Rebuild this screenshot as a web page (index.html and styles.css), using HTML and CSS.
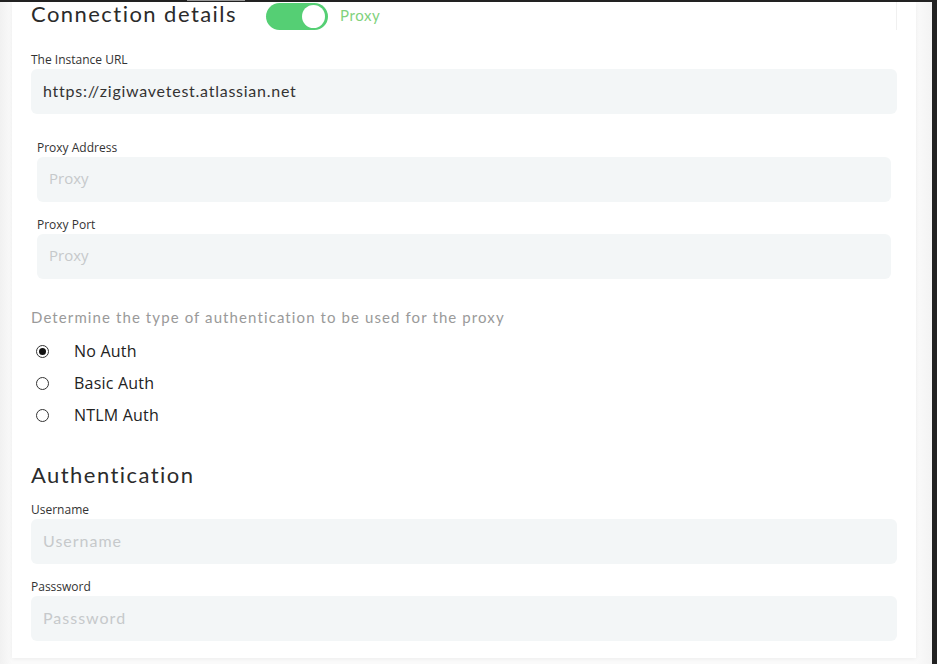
FILE: index.html
```html
<!DOCTYPE html>
<html lang="en">
<head>
    <meta charset="UTF-8">
    <meta name="viewport" content="width=device-width, initial-scale=1.0">
    <title>Connection details</title>
    <link rel="stylesheet" href="styles.css">
</head>
<body>

<div class="frame">
    <div class="topline"><span class="tab-line"></span></div>
    <div class="page">
        <div class="card">
            <div class="header">
                <h2 class="title">Connection details</h2>
                <div class="toggle on"><span class="knob"></span></div>
                <span class="toggle-label">Proxy</span>
                <div class="header-edge"></div>
            </div>

            <div class="field first">
                <label>The Instance URL</label>
                <div class="input value">https://zigiwavetest.atlassian.net</div>
            </div>

            <div class="proxy">
                <div class="field">
                    <label>Proxy Address</label>
                    <div class="input placeholder plain">Proxy</div>
                </div>
                <div class="field">
                    <label>Proxy Port</label>
                    <div class="input placeholder plain">Proxy</div>
                </div>
            </div>

            <p class="question">Determine the type of authentication to be used for the proxy</p>

            <div class="radios">
                <div class="radio checked"><span class="dot"></span>No Auth</div>
                <div class="radio"><span class="dot"></span>Basic Auth</div>
                <div class="radio"><span class="dot"></span>NTLM Auth</div>
            </div>

            <h2 class="title section">Authentication</h2>

            <div class="field tight">
                <label>Username</label>
                <div class="input placeholder">Username</div>
            </div>
            <div class="field">
                <label>Passsword</label>
                <div class="input placeholder">Passsword</div>
            </div>
        </div>
    </div>
</div>

</body>
</html>
```

FILE: styles.css
```css
html, body {
    margin: 0;
    padding: 0;
}
body {
    background-color: #ececec;
    font-family: "Open Sans", Arial, sans-serif;
    color: #333;
    overflow: hidden;
}
.frame {
    height: 664px;
    border-right: 5px solid #222;
    box-sizing: border-box;
    background: linear-gradient(to right, #f1f1f1, #fafafa 12px, #fafafa 916px, #f3f3f3);
}
.topline {
    height: 2px;
    background-color: #222;
    position: relative;
}
.tab-line {
    position: absolute;
    left: 187px;
    width: 58px;
    top: 0;
    height: 1px;
    background-color: #999;
}
.page {
    padding-left: 12px;
    width: 916px;
    box-sizing: border-box;
}
.card {
    background-color: #fff;
    padding: 0 19px 18px 19px;
    height: 656px;
    box-sizing: border-box;
    box-shadow: 0 1px 4px rgba(0, 0, 0, 0.06);
}
.header {
    display: flex;
    align-items: center;
    height: 30px;
    position: relative;
}
.header-edge {
    position: absolute;
    right: 0;
    top: 0;
    width: 1px;
    height: 28px;
    background-color: #f0f0f0;
}
.title {
    font-family: "Lato", sans-serif;
    font-weight: 400;
    font-size: 22px;
    letter-spacing: 1.45px;
    color: #2b2b2b;
    margin: 0;
    line-height: 30px;
}
.header .title {
    margin-top: -6px;
}
.toggle {
    width: 62px;
    height: 27px;
    border-radius: 14px;
    background-color: #55cf74;
    margin-left: 29px;
    position: relative;
    margin-top: -1px;
}
.knob {
    position: absolute;
    right: 3px;
    top: 2px;
    width: 23px;
    height: 23px;
    border-radius: 50%;
    background-color: #fff;
}
.toggle-label {
    font-family: "Lato", sans-serif;
    font-size: 15px;
    letter-spacing: 0.6px;
    color: #7fd27c;
    margin-left: 12px;
    margin-top: -4px;
}
.field {
    margin-top: 15px;
}
.field.first {
    margin-top: 20px;
}
.field.tight {
    margin-top: 12px;
}
label {
    display: block;
    font-size: 12px;
    line-height: 16px;
    color: #333;
    margin-bottom: 0;
}
.input {
    height: 45px;
    margin-top: 1px;
    background-color: #f3f6f7;
    border-radius: 6px;
    padding: 0 12px 3px 12px;
    box-sizing: border-box;
    display: flex;
    align-items: center;
    font-family: "Lato", sans-serif;
    font-size: 16px;
    letter-spacing: 0.75px;
}
.input.value {
    color: #333;
}
.input.placeholder {
    color: #c6c9cb;
    letter-spacing: 1px;
}
.input.plain {
    font-family: "Open Sans", sans-serif;
    font-size: 15px;
    letter-spacing: 0;
}
.proxy {
    padding: 11px 6px 0 6px;
}
.question {
    font-family: "Lato", sans-serif;
    font-size: 15px;
    letter-spacing: 1.1px;
    line-height: 20px;
    color: #9a9a9a;
    margin: 28px 0 8px 0;
}
.radio {
    display: flex;
    align-items: center;
    height: 32px;
    font-size: 16px;
    letter-spacing: 0.2px;
    color: #222;
}
.dot {
    width: 13px;
    height: 13px;
    border: 1px solid #333;
    border-radius: 50%;
    box-sizing: border-box;
    margin-left: 5px;
    margin-right: 25px;
    position: relative;
}
.radio.checked .dot::after {
    content: "";
    position: absolute;
    left: 2px;
    top: 2px;
    width: 7px;
    height: 7px;
    border-radius: 50%;
    background-color: #111;
}
.title.section {
    margin-top: 29px;
}
```
